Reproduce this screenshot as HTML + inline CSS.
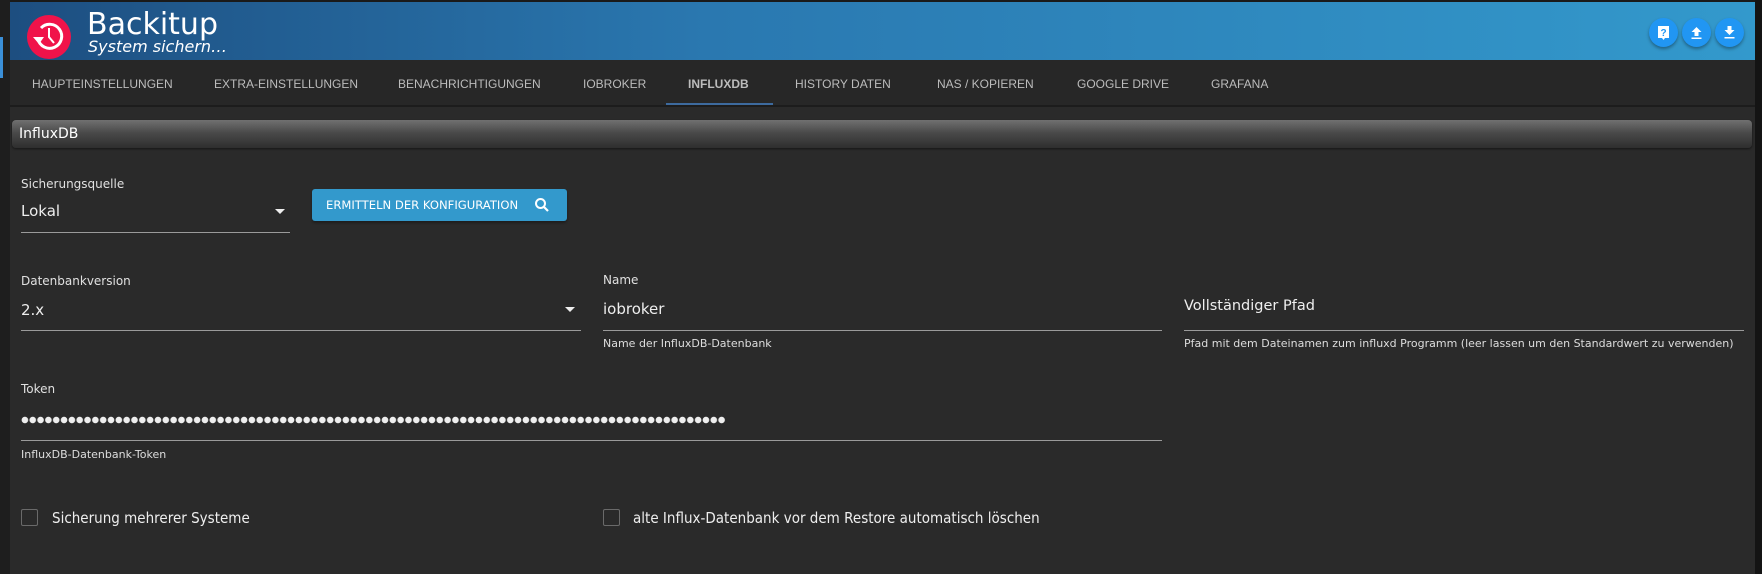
<!DOCTYPE html>
<html><head><meta charset="utf-8"><style>
*{margin:0;padding:0;box-sizing:border-box}
body{width:1762px;height:574px;overflow:hidden;background:#2a2a2a;font-family:"DejaVu Sans","Liberation Sans",sans-serif;color:#e6e6e6;position:relative}
.a{position:absolute;white-space:nowrap}
.tab{position:absolute;top:77px;font-family:"Liberation Sans",sans-serif;font-size:12px;color:#bcbcbc;line-height:14px}
.lbl{font-size:12px;color:#e0e0e0;line-height:14px}
.val{font-size:15px;color:#eee;line-height:18px}
.ul{position:absolute;height:1px;background:#9a9a9a}
.help{font-size:11px;color:#ddd;line-height:14px}
.cb{position:absolute;width:17px;height:17px;border:1px solid #6a6a6a;border-radius:2px}
.arr{position:absolute;width:0;height:0;border-left:5px solid transparent;border-right:5px solid transparent;border-top:5px solid #eee}
.fab{position:absolute;top:18px;width:29px;height:29px;border-radius:50%;background:#2196f3;box-shadow:0 2px 3px rgba(0,0,0,.35)}
.cond{transform:scaleX(.9);transform-origin:0 0}
</style></head><body>
<div class="a" style="left:0;top:0;width:1762px;height:2px;background:#1a1a1a"></div>
<div class="a" style="left:0;top:0;width:10px;height:574px;background:#1e1e1e"></div>
<div class="a" style="left:0;top:37px;width:3px;height:41px;background:#3a8fd8"></div>
<div class="a" style="left:1755px;top:0;width:7px;height:574px;background:#141414"></div>
<div class="a" style="left:10px;top:2px;width:1745px;height:58px;background:linear-gradient(90deg,#1d4e80 0%,#2a78b0 40%,#3399cc 100%)"></div>
<svg class="a" style="left:27px;top:15px" width="44" height="44" viewBox="0 0 44 44">
<circle cx="22" cy="22" r="22" fill="#f0134a"/>
<path d="M11 24 A12 12 0 1 0 14 13" fill="none" stroke="#fff" stroke-width="3"/>
<path d="M6 22 L12 29 L17 22 Z" fill="#fff"/>
<path d="M22 13 V22 L27 28" fill="none" stroke="#fff" stroke-width="2"/>
</svg>
<div class="a" style="left:87px;top:8px;font-size:30px;color:#fff;line-height:34px">Backitup</div>
<div class="a" style="left:88px;top:38px;font-size:16px;font-style:italic;color:#fff;line-height:18px">System sichern…</div>
<div class="fab" style="left:1649px"><svg width="29" height="29" viewBox="0 0 29 29"><rect x="9" y="8" width="11" height="12" fill="#fff"/><path d="M13 20 L14.5 22 L16 20Z" fill="#fff"/><text x="14.5" y="18" font-size="10" font-weight="bold" text-anchor="middle" fill="#2196f3" font-family="Liberation Sans">?</text></svg></div>
<div class="fab" style="left:1682px"><svg width="29" height="29" viewBox="0 0 29 29"><path d="M14.5 9 L19.5 14 H16.5 V18 H12.5 V14 H9.5Z" fill="#fff"/><rect x="9.5" y="19.5" width="10" height="1.5" fill="#fff"/></svg></div>
<div class="fab" style="left:1715px"><svg width="29" height="29" viewBox="0 0 29 29"><path d="M12.5 8 H16.5 V12 H19.5 L14.5 17 L9.5 12 H12.5Z" fill="#fff"/><rect x="9.5" y="19" width="10" height="1.5" fill="#fff"/></svg></div>
<div class="a" style="left:10px;top:60px;width:1745px;height:45px;background:#272727"></div>
<div class="a" style="left:10px;top:105px;width:1745px;height:2px;background:#1c1c1c"></div>
<div class="tab" style="left:32px">HAUPTEINSTELLUNGEN</div>
<div class="tab" style="left:214px">EXTRA-EINSTELLUNGEN</div>
<div class="tab" style="left:398px">BENACHRICHTIGUNGEN</div>
<div class="tab" style="left:583px">IOBROKER</div>
<div class="tab" style="left:688px;font-weight:bold">INFLUXDB</div>
<div class="tab" style="left:795px">HISTORY DATEN</div>
<div class="tab" style="left:937px">NAS / KOPIEREN</div>
<div class="tab" style="left:1077px">GOOGLE DRIVE</div>
<div class="tab" style="left:1211px">GRAFANA</div>
<div class="a" style="left:666px;top:103px;width:107px;height:2px;background:#3d6a9e"></div>
<div class="a" style="left:12px;top:120px;width:1740px;height:28px;border-radius:4px;background:linear-gradient(180deg,#707070 0%,#4a4a4a 45%,#2e2e2e 100%);box-shadow:0 1px 2px rgba(0,0,0,.5)"></div>
<div class="a" style="left:19px;top:125px;font-size:14px;color:#fff;line-height:18px">InfluxDB</div>

<div class="a lbl" style="left:21px;top:177px">Sicherungsquelle</div>
<div class="a val" style="left:21px;top:202px">Lokal</div>
<div class="arr" style="left:275px;top:209px"></div>
<div class="ul" style="left:21px;top:232px;width:269px"></div>
<div class="a" style="left:312px;top:189px;width:255px;height:32px;background:#3399cc;border-radius:3px;box-shadow:0 2px 2px rgba(0,0,0,.3)">
<div class="a" style="left:14px;top:9px;font-size:11.6px;color:#fff;line-height:14px">ERMITTELN DER KONFIGURATION</div>
<svg class="a" style="left:222px;top:8px" width="16" height="16" viewBox="0 0 16 16"><circle cx="6.5" cy="6.5" r="4.5" fill="none" stroke="#fff" stroke-width="2"/><path d="M10 10 L14 14" stroke="#fff" stroke-width="2.2"/></svg>
</div>

<div class="a lbl" style="left:21px;top:274px">Datenbankversion</div>
<div class="a val" style="left:21px;top:301px">2.x</div>
<div class="arr" style="left:565px;top:307px"></div>
<div class="ul" style="left:21px;top:330px;width:560px"></div>

<div class="a lbl" style="left:603px;top:273px">Name</div>
<div class="a val" style="left:603px;top:300px">iobroker</div>
<div class="ul" style="left:603px;top:330px;width:559px"></div>
<div class="a help" style="left:603px;top:337px">Name der InfluxDB-Datenbank</div>

<div class="a" style="left:1184px;top:297px;font-size:14.5px;color:#eee;line-height:18px">Vollständiger Pfad</div>
<div class="ul" style="left:1184px;top:330px;width:560px"></div>
<div class="a help" style="left:1184px;top:337px">Pfad mit dem Dateinamen zum influxd Programm (leer lassen um den Standardwert zu verwenden)</div>

<div class="a lbl" style="left:21px;top:382px">Token</div>
<div class="a" style="left:21px;top:416px;width:705px;height:8px;background:radial-gradient(circle at 3.9px 4px,#eee 3px,transparent 3.5px) 0 0/7.83px 8px repeat-x"></div>
<div class="ul" style="left:21px;top:440px;width:1141px"></div>
<div class="a help" style="left:21px;top:448px">InfluxDB-Datenbank-Token</div>

<div class="cb" style="left:21px;top:509px"></div>
<div class="a cond" style="left:52px;top:509px;font-size:15px;color:#eee;line-height:18px">Sicherung mehrerer Systeme</div>
<div class="cb" style="left:603px;top:509px"></div>
<div class="a cond" style="left:633px;top:509px;font-size:15px;color:#eee;line-height:18px">alte Influx-Datenbank vor dem Restore automatisch löschen</div>
</body></html>
